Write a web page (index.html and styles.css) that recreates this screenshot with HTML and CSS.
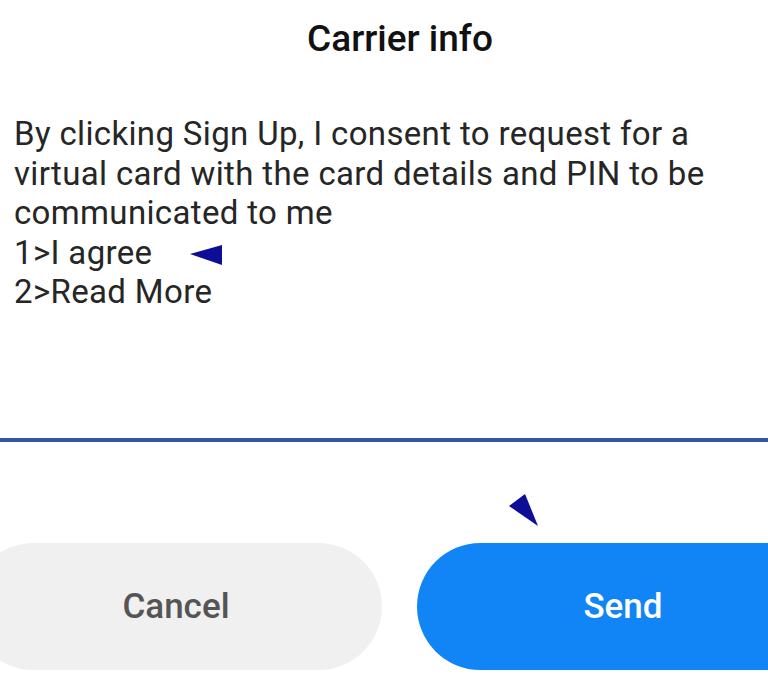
FILE: index.html
```html
<!DOCTYPE html>
<html>

<head>
    <title>Carrier info</title>
    <link rel="stylesheet" href="styles.css">
</head>

<body>
    <div class="screen">
        <div class="dialog">
            <h1 class="title">Carrier info</h1>
            <div class="message">
                <div class="line">By clicking Sign Up, I consent to request for a</div>
                <div class="line">virtual card with the card details and PIN to be</div>
                <div class="line">communicated to me</div>
                <div class="line">1&gt;I agree
                    <svg class="pointer pointer-left" width="34" height="22" viewBox="0 0 34 22">
                        <polygon points="1,10 33,1 33,21" />
                    </svg>
                </div>
                <div class="line">2&gt;Read More</div>
            </div>
            <div class="divider"></div>
            <div class="actions">
                <!-- marcador apontando para o botão -->
                <svg class="pointer pointer-up" width="34" height="36" viewBox="0 0 34 36">
                    <polygon points="1,12 17,0 30,32" />
                </svg>
                <button class="btn btn-cancel">Cancel</button>
                <button class="btn btn-send">Send</button>
            </div>
        </div>
    </div>
</body>

</html>
```

FILE: styles.css
```css
body {
    margin: 0;
    background: #ffffff;
    font-family: 'Roboto', 'Noto Sans', sans-serif;
}

.screen {
    width: 768px;
    height: 696px;
    overflow: hidden;
}

.dialog {
    width: 860px;
    margin-left: -30px;
}

.title {
    margin: 0;
    padding-top: 17px;
    font-size: 37px;
    line-height: 44px;
    font-weight: 500;
    color: #111111;
    text-align: center;
}

.message {
    margin-top: 53px;
    padding-left: 44px;
    font-size: 33px;
    letter-spacing: 0.35px;
    line-height: 39.5px;
    color: #262626;
}

.line {
    white-space: nowrap;
}

.pointer {
    fill: #0d0d96;
}

.pointer-left {
    margin-left: 28px;
    vertical-align: -2px;
}

.divider {
    height: 4px;
    margin-top: 126px;
    background-color: #34559f;
}

.actions {
    position: relative;
    display: flex;
    gap: 35px;
    padding-top: 101px;
}

.pointer-up {
    position: absolute;
    left: 538px;
    top: 52px;
}

.btn {
    width: 412px;
    height: 127px;
    border: none;
    border-radius: 64px;
    font-family: 'Roboto', sans-serif;
    font-size: 35px;
    font-weight: 500;
    cursor: pointer;
}

.btn-cancel {
    background-color: #f0f0f0;
    color: #555555;
}

.btn-send {
    background-color: #1185f5;
    color: #ffffff;
}
```
